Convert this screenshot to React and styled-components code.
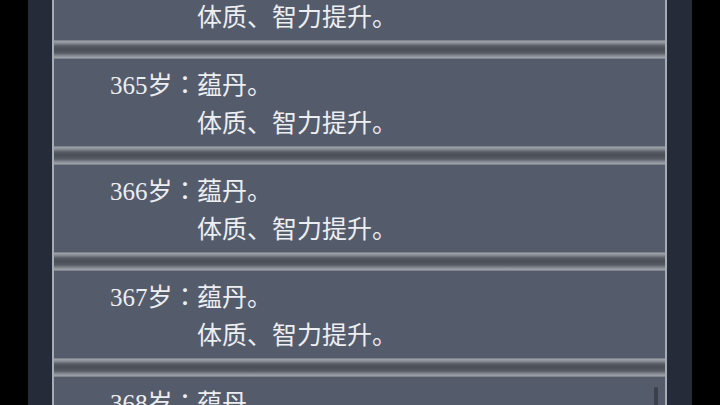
import React from "react";
import styled, { createGlobalStyle } from "styled-components";

const Global = createGlobalStyle`
  html, body { margin: 0; padding: 0; background: #000; overflow: hidden; }
  #root { width: 720px; height: 405px; }
`;

const Screen = styled.div`
  display: flex;
  width: 720px;
  height: 405px;
  background: #000;
  overflow: hidden;
`;

const Letterbox = styled.div`
  width: 28px;
  flex: none;
  background: #000;
`;

const Frame = styled.div`
  width: ${(p) => p.$w}px;
  flex: none;
  background: #252b39;
`;

const Panel = styled.div`
  position: relative;
  flex: 1;
  background: #545c6c;
  border-left: 2px solid #a7abb3;
  border-right: 2px solid #a7abb3;
  overflow: hidden;
`;

/* the log is scrolled, so the first entry is partly above the top edge */
const List = styled.div`
  display: flex;
  flex-direction: column;
  margin-top: -47px;
`;

const Divider = styled.div`
  height: 19px;
  flex: none;
  background: linear-gradient(
    to bottom,
    #5e6470 0px,
    #a0a4ab 1px,
    #8a8f98 3px,
    #575b64 6px,
    #4a4e56 9px,
    #575b64 13px,
    #8a8f98 16px,
    #a0a4ab 18px,
    #5e6470 19px
  );
`;

const Entry = styled.div`
  display: grid;
  grid-template-columns: 87px 1fr;
  height: 87px;
  box-sizing: border-box;
  padding: 5px 0 0 56px;
  font-size: 25px;
  line-height: 38px;
  color: #eceef1;
  font-family: "Liberation Serif", "Noto Sans CJK SC", serif;
`;

const Age = styled.div`
  white-space: nowrap;
`;

/* full-width colon sits centred in its cell */
const Colon = styled.span`
  font-family: "Noto Sans CJK TC", sans-serif;
`;

const Lines = styled.div`
  display: flex;
  flex-direction: column;
  font-family: "Noto Sans CJK SC", sans-serif;
  white-space: nowrap;
`;

const Thumb = styled.div`
  position: absolute;
  right: 7px;
  top: 387px;
  width: 4px;
  height: 30px;
  border-radius: 2px;
  background: #3a3f49;
`;

const ages = [364, 365, 366, 367, 368];

export default function App() {
  return (
    <>
      <Global />
      <Screen>
        <Letterbox />
        <Frame $w={24} />
        <Panel>
          <List>
            {ages.map((age, i) => (
              <React.Fragment key={age}>
                {i > 0 && <Divider />}
                <Entry>
                  <Age>
                    {age}岁<Colon>：</Colon>
                  </Age>
                  <Lines>
                    <span>蕴丹。</span>
                    <span>体质、智力提升。</span>
                  </Lines>
                </Entry>
              </React.Fragment>
            ))}
          </List>
          <Thumb />
        </Panel>
        <Frame $w={25} />
        <Letterbox />
      </Screen>
    </>
  );
}
